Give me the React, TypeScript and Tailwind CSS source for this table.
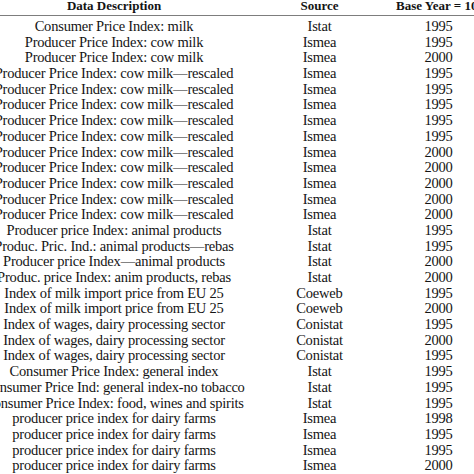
const rows: [string, string, string][] = [
  ['Consumer Price Index: milk', 'Istat', '1995'],
  ['Producer Price Index: cow milk', 'Ismea', '1995'],
  ['Producer Price Index: cow milk', 'Ismea', '2000'],
  ['Producer Price Index: cow milk\u2014rescaled', 'Ismea', '1995'],
  ['Producer Price Index: cow milk\u2014rescaled', 'Ismea', '1995'],
  ['Producer Price Index: cow milk\u2014rescaled', 'Ismea', '1995'],
  ['Producer Price Index: cow milk\u2014rescaled', 'Ismea', '1995'],
  ['Producer Price Index: cow milk\u2014rescaled', 'Ismea', '1995'],
  ['Producer Price Index: cow milk\u2014rescaled', 'Ismea', '2000'],
  ['Producer Price Index: cow milk\u2014rescaled', 'Ismea', '2000'],
  ['Producer Price Index: cow milk\u2014rescaled', 'Ismea', '2000'],
  ['Producer Price Index: cow milk\u2014rescaled', 'Ismea', '2000'],
  ['Producer Price Index: cow milk\u2014rescaled', 'Ismea', '2000'],
  ['Producer price Index: animal products', 'Istat', '1995'],
  ['Produc. Pric. Ind.: animal products\u2014rebas', 'Istat', '1995'],
  ['Producer price Index\u2014animal products', 'Istat', '2000'],
  ['Produc. price Index: anim products, rebas', 'Istat', '2000'],
  ['Index of milk import price from EU 25', 'Coeweb', '1995'],
  ['Index of milk import price from EU 25', 'Coeweb', '2000'],
  ['Index of wages, dairy processing sector', 'Conistat', '1995'],
  ['Index of wages, dairy processing sector', 'Conistat', '2000'],
  ['Index of wages, dairy processing sector', 'Conistat', '1995'],
  ['Consumer Price Index: general index', 'Istat', '1995'],
  ['Consumer Price Ind: general index-no tobacco', 'Istat', '1995'],
  ['Consumer Price Index: food, wines and spirits', 'Istat', '1995'],
  ['producer price index for dairy farms', 'Ismea', '1998'],
  ['producer price index for dairy farms', 'Ismea', '1995'],
  ['producer price index for dairy farms', 'Ismea', '1995'],
  ['producer price index for dairy farms', 'Ismea', '2000'],
]

export default function App() {
  return (
    <div className="h-[474px] w-[474px] overflow-hidden bg-white font-['Liberation_Serif',serif] text-[#141414]">
      <div className="grid h-[15px] w-[500px] -ml-[17px] grid-cols-[262px_149px_89px] whitespace-nowrap text-center text-[13px] font-bold leading-[12px]">
        <div>Data Description</div>
        <div>Source</div>
        <div className="pl-[2px] text-left">Base Year = 100</div>
      </div>
      <div className="h-px w-full bg-[#7d7d7d]" />
      <div className="-ml-[17px] w-[500px] pt-[3px] text-[14.5px] tracking-[-0.2px]">
        {rows.map(([desc, source, year], i) => (
          <div
            key={i}
            className="grid h-[15.7px] grid-cols-[262px_149px_89px] whitespace-nowrap text-center leading-[15.7px]"
          >
            <div>{desc}</div>
            <div>{source}</div>
            <div>{year}</div>
          </div>
        ))}
      </div>
    </div>
  )
}
